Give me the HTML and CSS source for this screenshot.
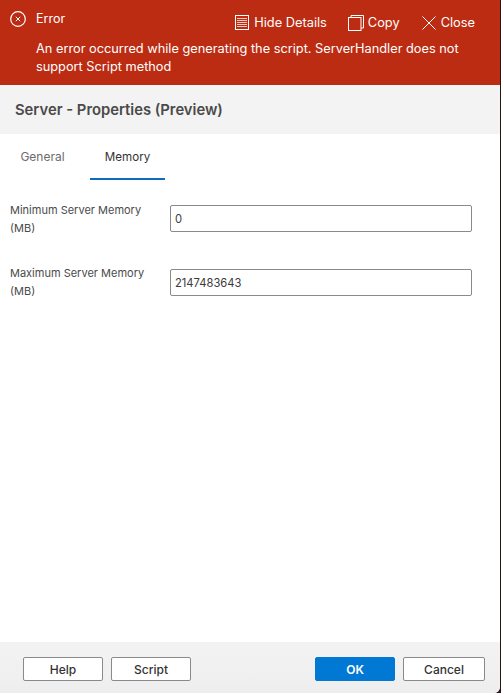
FILE: index.html
```html
<!DOCTYPE html>
<html lang="en">
<head>
<meta charset="utf-8">
<title>Server - Properties (Preview)</title>
<link rel="stylesheet" href="styles.css">
</head>
<body>
<div class="dialog">
  <section class="banner">
    <div class="banner-top">
      <div class="banner-title">
        <svg class="icon-error" width="16" height="16" viewBox="0 0 16 16" fill="none" stroke="#fff"><circle cx="8" cy="8" r="7.3" stroke-width="1.2"/><path d="M5.8 5.8l4.4 4.4M10.2 5.8l-4.4 4.4"/></svg>
        <span>Error</span>
      </div>
      <div class="banner-actions">
        <button class="banner-action action-details"><svg width="14" height="15" viewBox="0 0 14 15" fill="none" stroke="#fff"><rect x=".5" y=".5" width="13" height="14"/><path d="M2 3.5h10M2 5.5h10M2 7.5h10M2 9.5h10M2 11.5h10" stroke-width=".75"/></svg>Hide Details</button>
        <button class="banner-action action-copy"><svg width="16" height="16" viewBox="0 0 16 16" fill="none" stroke="#fff"><rect x=".5" y="2.5" width="12.5" height="13"/><path d="M3 2.5V.5h12.5v12.5H13"/></svg>Copy</button>
        <button class="banner-action action-close"><svg width="14" height="14" viewBox="0 0 14 14" fill="none" stroke="#fff"><path d="M.5.5l13 13M13.5.5l-13 13"/></svg>Close</button>
      </div>
    </div>
    <p class="banner-message">An error occurred while generating the script. ServerHandler does not support Script method</p>
  </section>
  <header class="dialog-header">Server - Properties (Preview)</header>
  <nav class="tabs">
    <a class="tab">General</a>
    <a class="tab tab-active">Memory</a>
  </nav>
  <main class="form">
    <div class="field">
      <label class="field-label">Minimum Server Memory (MB)</label>
      <input class="field-input" type="text" value="0">
    </div>
    <div class="field">
      <label class="field-label">Maximum Server Memory (MB)</label>
      <input class="field-input" type="text" value="2147483643">
    </div>
  </main>
  <footer class="footer">
    <div class="footer-group">
      <button class="btn">Help</button>
      <button class="btn">Script</button>
    </div>
    <div class="footer-group">
      <button class="btn btn-primary">OK</button>
      <button class="btn btn-cancel">Cancel</button>
    </div>
  </footer>
</div>
</body>
</html>
```
FILE: styles.css
```css
* { box-sizing: border-box; }
html, body { margin: 0; height: 100%; }
body { font-family: Inter, "Liberation Sans", sans-serif; background: #2a1512; }
.dialog { width: 500px; height: 693px; display: flex; flex-direction: column; overflow: hidden; background: #fff; border-bottom-right-radius: 6px; }
.banner { height: 85px; background: #bc2c12; color: #fff; padding: 10px 25px 0 10px; flex: none; }
.banner-top { display: flex; justify-content: space-between; align-items: center; height: 17px; }
.banner-title { display: flex; align-items: center; gap: 10px; font-size: 12.5px; }
.banner-actions { display: flex; gap: 21px; margin-top: 8px; }
.banner-action { display: flex; align-items: center; gap: 5px; background: none; border: 0; padding: 0; color: #fff; font: inherit; font-size: 12.8px; }
.action-copy { gap: 4px; }
.action-close { margin-left: 1px; }
.banner-message { margin: 13px 0 0 26px; font-size: 12.78px; line-height: 18px; width: 440px; }
.dialog-header { height: 49px; flex: none; background: #f3f3f3; padding: 0 15px; display: flex; align-items: center; font-size: 14.8px; font-weight: 600; color: #4a4a4a; }
.tabs { height: 46px; flex: none; display: flex; padding-left: 5px; }
.tab { height: 46px; width: 75px; display: flex; align-items: center; justify-content: center; padding-bottom: 1px; font-size: 12px; color: #6b6b6b; margin-right: 10px; }
.tab-active { color: #333; border-bottom: 2px solid #0f6cbd; padding: 1px 0 0; font-size: 11.6px; }
.form { flex: 1; padding: 25px 28px 0 10px; display: flex; flex-direction: column; gap: 37px; }
.field { display: flex; align-items: flex-start; height: 27px; }
.field-label { width: 160px; font-size: 11px; line-height: 18px; color: #4a4a4a; margin-top: -4px; padding-right: 12px; }
.field + .field .field-label { margin-top: -5px; }
.field-input { flex: 1; height: 27px; border: 1px solid #8a8a8a; border-radius: 2px; padding: 0 4px; font: inherit; font-size: 11.2px; color: #3a3a3a; background: #fff; outline: 0; }
.footer { height: 51px; flex: none; background: linear-gradient(#f3f3f3, #eeeeee); padding: 15px 15px 0 23px; display: flex; justify-content: space-between; }
.footer-group { display: flex; gap: 8px; }
.btn { width: 80px; height: 24px; border: 1px solid #8a8a8a; border-radius: 2px; background: #fff; color: #333; font: inherit; font-size: 12px; font-weight: 500; padding: 0; }
.btn-primary { background: #0078d4; border-color: #0078d4; color: #fff; font-weight: 600; }
.btn-cancel { width: 82px; }
```
